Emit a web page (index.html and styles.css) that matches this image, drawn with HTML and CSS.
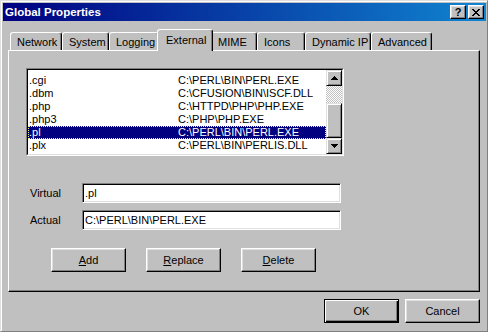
FILE: index.html
```html
<!DOCTYPE html>
<html>
<head>
<meta charset="utf-8">
<title>Global Properties</title>
<link rel="stylesheet" href="styles.css">
</head>
<body>
<div class="window">
  <div class="titlebar">
    <span class="title">Global Properties</span>
    <div class="tb-buttons">
      <div class="tbtn help">?</div>
      <div class="tbtn close">
        <svg width="8" height="7" viewBox="0 0 8 7" shape-rendering="crispEdges"><path d="M0 0h2v1h-2z M6 0h2v1h-2z M1 1h2v1h-2z M5 1h2v1h-2z M2 2h4v1h-4z M3 3h2v1h-2z M2 4h4v1h-4z M1 5h2v1h-2z M5 5h2v1h-2z M0 6h2v1h-2z M6 6h2v1h-2z" fill="#000"/></svg>
      </div>
    </div>
  </div>
  <div class="content">
    <div class="tabs">
      <div class="tab t-network">Network</div>
      <div class="tab t-system">System</div>
      <div class="tab t-logging">Logging</div>
      <div class="tab t-external sel">External</div>
      <div class="tab t-mime">MIME</div>
      <div class="tab t-icons">Icons</div>
      <div class="tab t-dynamic">Dynamic IP</div>
      <div class="tab t-advanced">Advanced</div>
    </div>
    <div class="panel">
      <div class="listbox">
        <div class="list-inner">
          <div class="items">
            <div class="row"><span>.cgi</span><span>C:\PERL\BIN\PERL.EXE</span></div>
            <div class="row"><span>.dbm</span><span>C:\CFUSION\BIN\ISCF.DLL</span></div>
            <div class="row"><span>.php</span><span>C:\HTTPD\PHP\PHP.EXE</span></div>
            <div class="row"><span>.php3</span><span>C:\PHP\PHP.EXE</span></div>
            <div class="row selected"><span>.pl</span><span>C:\PERL\BIN\PERL.EXE</span></div>
            <div class="row"><span>.plx</span><span>C:\PERL\BIN\PERLIS.DLL</span></div>
          </div>
          <div class="scrollbar">
            <div class="sb-btn">
              <svg width="7" height="4" viewBox="0 0 7 4" shape-rendering="crispEdges"><path d="M3 0h1v1h-1z M2 1h3v1h-3z M1 2h5v1h-5z M0 3h7v1h-7z" fill="#000"/></svg>
            </div>
            <div class="sb-track"></div>
            <div class="sb-thumb"></div>
            <div class="sb-btn">
              <svg width="7" height="4" viewBox="0 0 7 4" shape-rendering="crispEdges"><path d="M0 0h7v1h-7z M1 1h5v1h-5z M2 2h3v1h-3z M3 3h1v1h-1z" fill="#000"/></svg>
            </div>
          </div>
        </div>
      </div>
      <div class="fields">
        <span class="lbl">Virtual</span>
        <div class="field">.pl</div>
        <span class="lbl">Actual</span>
        <div class="field">C:\PERL\BIN\PERL.EXE</div>
      </div>
      <div class="actions">
        <div class="btn"><span><u>A</u>dd</span></div>
        <div class="btn"><span><u>R</u>eplace</span></div>
        <div class="btn"><span><u>D</u>elete</span></div>
      </div>
    </div>
    <div class="footer">
      <div class="btn default">OK</div>
      <div class="btn">Cancel</div>
    </div>
  </div>
</div>
</body>
</html>
```

FILE: styles.css
```css
* {
  box-sizing: border-box;
}

html,
body {
  margin: 0;
  padding: 0;
}

body {
  width: 488px;
  height: 332px;
  overflow: hidden;
  background: #c0c0c0;
  font-family: "Liberation Sans", Arial, sans-serif;
  font-size: 11px;
  color: #000;
}

.window {
  width: 488px;
  height: 332px;
  border-style: solid;
  border-width: 1px;
  border-color: #dfdfdf #808080 #808080 #dfdfdf;
  box-shadow: inset 1px 1px #fff;
  padding: 2px 1px 1px 2px;
  display: flex;
  flex-direction: column;
}

/* Title bar */
.titlebar {
  height: 18px;
  flex: none;
  background: linear-gradient(to right, #000080, #1084d0);
  display: flex;
  align-items: center;
  justify-content: space-between;
  padding: 0 2px;
}

.title {
  color: #fff;
  font-weight: bold;
  font-size: 11.5px;
  line-height: 14px;
}

.tb-buttons {
  display: flex;
  gap: 2px;
}

.tbtn {
  width: 16px;
  height: 14px;
  background: #c0c0c0;
  border: 1px solid;
  border-color: #fff #000 #000 #fff;
  box-shadow: inset -1px -1px #808080, inset 1px 1px #dfdfdf;
  display: flex;
  align-items: center;
  justify-content: center;
}

.help {
  font-weight: bold;
  font-size: 11px;
  line-height: 11px;
  padding-top: 1px;
}

.close svg {
  display: block;
}

/* Body */
.content {
  flex: 1;
  padding: 8px 6px 0 5px;
  display: flex;
  flex-direction: column;
}

.tabs {
  height: 21px;
  flex: none;
  display: flex;
  align-items: flex-end;
  padding-left: 2px;
}

.tab {
  height: 18px;
  border-top: 1px solid #fff;
  border-left: 1px solid #fff;
  border-right: 1px solid #000;
  border-radius: 3px 3px 0 0;
  box-shadow: inset -1px 0 #808080;
  padding-left: 6px;
  display: flex;
  align-items: center;
  white-space: nowrap;
  background: #c0c0c0;
}

.t-network { width: 52px; }
.t-system { width: 47px; }
.t-logging { width: 50px; }
.t-external { width: 52px; }
.t-mime { width: 46px; }
.t-icons { width: 48px; }
.t-dynamic { width: 66px; }
.t-advanced { width: 61px; }

.tab.sel {
  width: 56px;
  height: 22px;
  margin: 0 -2px -1px;
  padding-left: 8px;
  padding-bottom: 2px;
  position: relative;
  z-index: 1;
}

.panel {
  height: 242px;
  flex: none;
  border: 1px solid;
  border-color: #fff #000 #000 #fff;
  box-shadow: inset -1px -1px #808080;
  padding: 17px 0 0 17px;
}

/* List box */
.listbox {
  width: 318px;
  height: 88px;
  border: 1px solid;
  border-color: #808080 #fff #fff #808080;
}

.list-inner {
  height: 100%;
  border: 1px solid;
  border-color: #000 #dfdfdf #dfdfdf #000;
  background: #fff;
  display: flex;
}

.items {
  flex: 1;
  padding-top: 4px;
}

.row {
  height: 13px;
  display: grid;
  grid-template-columns: 149px 1fr;
  border: 1px solid transparent;
  line-height: 11px;
  white-space: nowrap;
}

.row.selected {
  background: #000080;
  color: #fff;
  border: 1px dotted #ffff60;
}

.scrollbar {
  width: 16px;
  display: flex;
  flex-direction: column;
}

.sb-btn,
.sb-thumb {
  background: #c0c0c0;
  border: 1px solid;
  border-color: #dfdfdf #000 #000 #dfdfdf;
  box-shadow: inset 1px 1px #fff, inset -1px -1px #808080;
}

.sb-btn {
  height: 16px;
  display: flex;
  align-items: center;
  justify-content: center;
}

.sb-btn svg {
  display: block;
}

.sb-track {
  height: 17px;
  background: repeating-conic-gradient(#fff 0 25%, #c0c0c0 0 50%) 0 0 / 2px 2px;
}

.sb-thumb {
  flex: 1;
}

/* Fields */
.fields {
  margin-top: 27px;
  padding-left: 4px;
  display: grid;
  grid-template-columns: 52px 259px;
  row-gap: 7px;
  align-items: center;
}

.lbl {
  line-height: 13px;
}

.field {
  height: 20px;
  background: #fff;
  border: 1px solid;
  border-color: #808080 #fff #fff #808080;
  box-shadow: inset 1px 1px #000, inset -1px -1px #dfdfdf;
  padding: 0 2px;
  display: flex;
  align-items: center;
  white-space: nowrap;
}

/* Buttons */
.actions {
  margin-top: 18px;
  margin-left: 25px;
  display: flex;
  gap: 20px;
}

.btn {
  width: 75px;
  height: 24px;
  background: #c0c0c0;
  border: 1px solid;
  border-color: #fff #000 #000 #fff;
  box-shadow: inset -1px -1px #808080, inset 1px 1px #dfdfdf;
  display: flex;
  align-items: center;
  justify-content: center;
  padding-bottom: 1px;
}

.btn u {
  text-decoration-thickness: 1px;
  text-underline-offset: 1px;
}

.btn.default {
  border-color: #000;
  box-shadow: inset 1px 1px #fff, inset -1px -1px #000, inset -2px -2px #808080;
}

.footer {
  margin-top: 7px;
  display: flex;
  justify-content: flex-end;
  gap: 6px;
}
```
